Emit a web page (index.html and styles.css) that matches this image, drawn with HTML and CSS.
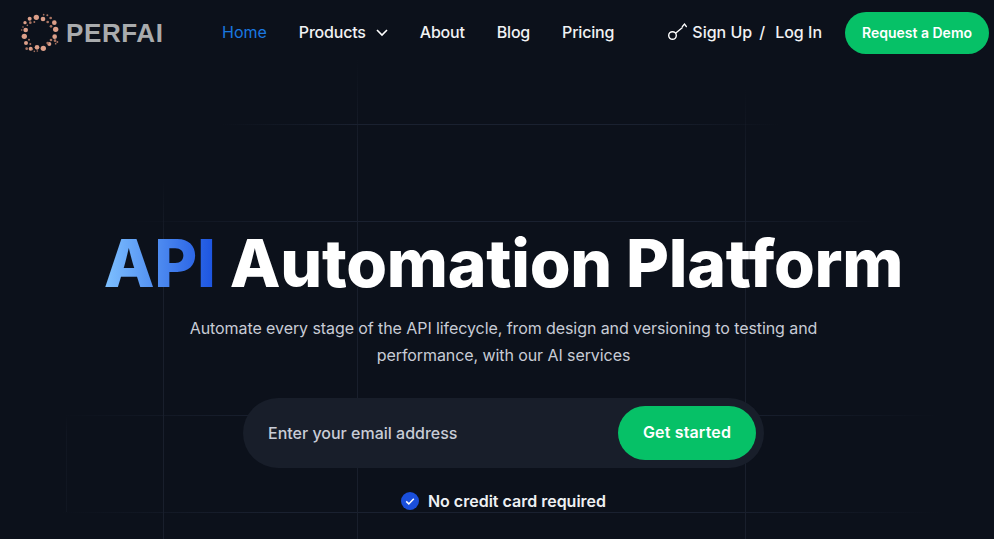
FILE: index.html
```html
<!DOCTYPE html>
<html lang="en">
<head>
  <meta charset="UTF-8">
  <title>PerfAI</title>
  <link rel="stylesheet" href="styles.css">
</head>
<body>
  <div class="lines">
    <div class="line-h lh1"></div>
    <div class="line-h lh2"></div>
    <div class="line-h lh3"></div>
    <div class="line-h lh4"></div>
    <div class="line-v lv1"></div>
    <div class="line-v lv2"></div>
    <div class="line-v lv3"></div>
    <div class="line-v lv4"></div>
  </div>

  <header class="topbar">
    <a class="logo" href="#">
      <svg class="logo-mark" viewBox="0 0 150 150" width="50" height="50">
        <g fill="#dc9f89">
          <circle cx="64" cy="28" r="8"/><circle cx="84" cy="33" r="7"/><circle cx="44" cy="32" r="6"/>
          <circle cx="30" cy="44" r="5"/><circle cx="118" cy="44" r="7"/><circle cx="122" cy="64" r="8"/>
          <circle cx="119" cy="86" r="7"/><circle cx="103" cy="108" r="6"/><circle cx="85" cy="121" r="8"/>
          <circle cx="66" cy="118" r="7"/><circle cx="47" cy="122" r="6"/><circle cx="33" cy="105" r="6"/>
          <circle cx="28" cy="85" r="8"/><circle cx="32" cy="66" r="7"/>
        </g>
        <g fill="#a87361">
          <circle cx="86" cy="20" r="2.5"/><circle cx="97" cy="22" r="3"/><circle cx="107" cy="30" r="4"/>
          <circle cx="98" cy="42" r="4"/><circle cx="58" cy="42" r="3"/><circle cx="46" cy="44" r="4"/>
          <circle cx="37" cy="52" r="2.5"/><circle cx="24" cy="57" r="2.5"/><circle cx="20" cy="66" r="2.5"/>
          <circle cx="108" cy="55" r="4"/><circle cx="127" cy="102" r="3"/><circle cx="122" cy="107" r="2.5"/>
          <circle cx="120" cy="98" r="4"/><circle cx="108" cy="96" r="4"/><circle cx="98" cy="105" r="4"/>
          <circle cx="46" cy="108" r="3"/><circle cx="52" cy="124" r="2.5"/><circle cx="35" cy="122" r="4"/>
          <circle cx="58" cy="130" r="2.5"/><circle cx="67" cy="129" r="2.5"/><circle cx="42" cy="95" r="3"/>
        </g>
      </svg>
      <span class="logo-text">PERFAI</span>
    </a>

    <nav class="menu">
      <a class="active" href="#">Home</a>
      <a class="has-sub" href="#">Products
        <svg viewBox="0 0 12 8" width="12" height="8"><path d="M1 1l5 5 5-5" fill="none" stroke="#fff" stroke-width="1.6"/></svg>
      </a>
      <a href="#">About</a>
      <a href="#">Blog</a>
      <a href="#">Pricing</a>
    </nav>

    <div class="account">
      <svg viewBox="0 0 20 20" width="20" height="20">
        <circle cx="5.5" cy="13.5" r="3.8" fill="none" stroke="#fff" stroke-width="1.4"/>
        <path d="M8.5 11.2l7-5.7M15 5l2.5-3 2.2 3" fill="none" stroke="#fff" stroke-width="1.3"/>
      </svg>
      <a href="#">Sign Up</a>
      <span class="slash">/</span>
      <a href="#">Log In</a>
    </div>
    <a class="demo-btn" href="#">Request a Demo</a>
  </header>

  <main class="hero">
    <h1><span class="grad">API</span> Automation Platform</h1>
    <p class="lead">Automate every stage of the API lifecycle, from design and versioning to testing and performance, with our AI services</p>

    <form class="signup">
      <input type="text" class="email" placeholder="Enter your email address">
      <button type="button" class="start-btn">Get started</button>
    </form>

    <div class="note">
      <svg viewBox="0 0 18 18" width="18" height="18">
        <circle cx="9" cy="9" r="9" fill="#1a4fdb"/>
        <path d="M5.2 9.4l2.6 2.5 5-5.2" fill="none" stroke="#fff" stroke-width="1.5"/>
      </svg>
      <span>No credit card required</span>
    </div>
  </main>
</body>
</html>
```

FILE: styles.css
```css
* {
  box-sizing: border-box;
}

html, body {
  height: 100%;
}

body {
  margin: 0;
  position: relative;
  overflow: hidden;
  background: #0c111b;
  color: #fff;
  font-family: Inter, 'Liberation Sans', sans-serif;
}

a {
  color: inherit;
  text-decoration: none;
}

/* faint grid behind the hero */
.lines {
  position: absolute;
  inset: 0;
}

.line-h, .line-v {
  position: absolute;
}

.line-h {
  height: 1px;
  background: linear-gradient(to right, transparent, #1a2130 25%, #1a2130 75%, transparent);
}

.line-v {
  width: 1px;
  background: linear-gradient(to bottom, transparent, #191f2c 20%, #191f2c 85%);
}

.lh1 { top: 124px; left: 220px; width: 560px; }
.lh2 { top: 221px; left: 130px; width: 750px; }
.lh3 { top: 415px; left: 60px; width: 880px; }
.lh4 { top: 512px; left: 60px; width: 880px; }
.lv1 { left: 66px; top: 415px; height: 97px; opacity: 0.4; }
.lv2 { left: 163px; top: 180px; height: 359px; }
.lv3 { left: 357px; top: 60px; height: 479px; }
.lv4 { left: 745px; top: 90px; height: 449px; }

.topbar {
  position: relative;
  display: flex;
  align-items: center;
  height: 66px;
  padding-right: 5px;
}

.logo {
  display: flex;
  align-items: center;
  width: 222px;
  padding-left: 15px;
}

.logo-text {
  margin-left: 1px;
  font-family: 'Liberation Sans', sans-serif;
  font-size: 26px;
  font-weight: 700;
  letter-spacing: 0.6px;
  color: #a9abad;
}

.menu {
  display: flex;
  gap: 32px;
  padding-bottom: 2px;
  font-size: 16px;
  font-weight: 500;
  letter-spacing: -0.2px;
  color: #f1f2f4;
}

.menu .active {
  color: #1a78e0;
  font-weight: 400;
  letter-spacing: 0;
}

.has-sub svg {
  margin-left: 6px;
  margin-bottom: 1px;
}

.account {
  display: flex;
  align-items: center;
  margin-left: auto;
  padding-bottom: 2px;
  font-size: 16px;
  font-weight: 500;
  color: #f1f2f4;
}

.account svg {
  margin-right: 5px;
}

.slash {
  margin: 0 10px 0 7px;
}

.demo-btn {
  display: flex;
  align-items: center;
  justify-content: center;
  width: 144px;
  height: 42px;
  margin-left: 23px;
  padding-bottom: 1px;
  border-radius: 21px;
  background: #06c167;
  font-size: 14px;
  font-weight: 600;
}

.hero {
  position: relative;
  display: flex;
  flex-direction: column;
  align-items: center;
  padding: 156px 0 0 13px;
}

h1 {
  margin: 0;
  font-size: 66px;
  font-weight: 800;
  letter-spacing: -0.27px;
  line-height: 82px;
  white-space: nowrap;
}

.grad {
  background: linear-gradient(to right, #7fc1ff, #1a52e0);
  -webkit-background-clip: text;
  background-clip: text;
  color: transparent;
}

.lead {
  width: 640px;
  margin: 11px 0 0;
  font-size: 16px;
  letter-spacing: -0.08px;
  line-height: 27px;
  text-align: center;
  color: #c8ccd6;
}

.signup {
  display: flex;
  align-items: center;
  justify-content: space-between;
  width: 521px;
  height: 70px;
  margin-top: 29px;
  padding: 0 8px 0 23px;
  border-radius: 35px;
  background: #181e2a;
}

.email {
  flex: 1;
  border: none;
  outline: none;
  background: none;
  font-family: inherit;
  font-size: 16px;
  font-weight: 500;
  color: #fff;
}

.email::placeholder {
  color: #c8ccd6;
  opacity: 1;
}

.start-btn {
  width: 138px;
  height: 54px;
  padding-bottom: 3px;
  border: none;
  border-radius: 27px;
  background: #06c167;
  color: #fff;
  font-family: inherit;
  font-size: 16px;
  font-weight: 600;
  letter-spacing: 0.15px;
  cursor: pointer;
}

.note {
  display: flex;
  align-items: center;
  gap: 9px;
  margin-top: 23px;
  font-size: 16px;
  font-weight: 600;
  color: #eef0f3;
}
```
